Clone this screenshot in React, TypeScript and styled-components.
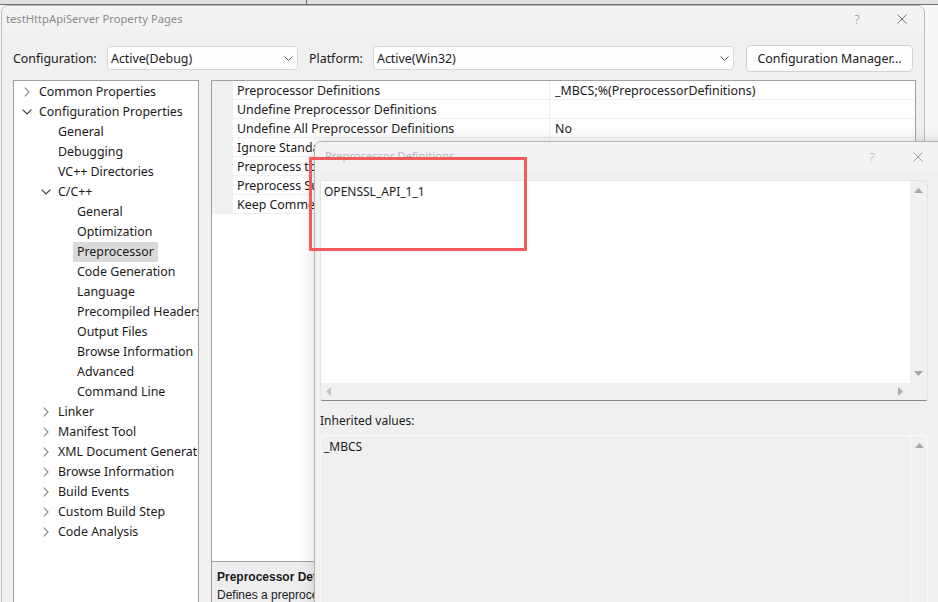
import React from 'react'
import styled, { createGlobalStyle } from 'styled-components'

const uiFont = `'Noto Sans', 'Open Sans', sans-serif`
const dlgFont = `'Liberation Sans', Arial, sans-serif`

const GlobalStyle = createGlobalStyle`
	html, body {
		margin: 0;
		padding: 0;
		overflow: hidden;
		background: #f8f8f8;
	}
	* {
		box-sizing: border-box;
	}
`

interface TreeItem {
	label: string
	level: number
	toggle?: 'open' | 'closed'
	selected?: boolean
}

const treeItems: TreeItem[] = [
	{ label: 'Common Properties', level: 0, toggle: 'closed' },
	{ label: 'Configuration Properties', level: 0, toggle: 'open' },
	{ label: 'General', level: 1 },
	{ label: 'Debugging', level: 1 },
	{ label: 'VC++ Directories', level: 1 },
	{ label: 'C/C++', level: 1, toggle: 'open' },
	{ label: 'General', level: 2 },
	{ label: 'Optimization', level: 2 },
	{ label: 'Preprocessor', level: 2, selected: true },
	{ label: 'Code Generation', level: 2 },
	{ label: 'Language', level: 2 },
	{ label: 'Precompiled Headers', level: 2 },
	{ label: 'Output Files', level: 2 },
	{ label: 'Browse Information', level: 2 },
	{ label: 'Advanced', level: 2 },
	{ label: 'Command Line', level: 2 },
	{ label: 'Linker', level: 1, toggle: 'closed' },
	{ label: 'Manifest Tool', level: 1, toggle: 'closed' },
	{ label: 'XML Document Generator', level: 1, toggle: 'closed' },
	{ label: 'Browse Information', level: 1, toggle: 'closed' },
	{ label: 'Build Events', level: 1, toggle: 'closed' },
	{ label: 'Custom Build Step', level: 1, toggle: 'closed' },
	{ label: 'Code Analysis', level: 1, toggle: 'closed' },
]

const properties: [string, string][] = [
	['Preprocessor Definitions', '_MBCS;%(PreprocessorDefinitions)'],
	['Undefine Preprocessor Definitions', ''],
	['Undefine All Preprocessor Definitions', 'No'],
	['Ignore Standard Include Paths', 'No'],
	['Preprocess to a File', 'No'],
	['Preprocess Suppress Line Numbers', 'No'],
	['Keep Comments', 'No'],
]

const CloseGlyph = ({ color }: { color: string }) => (
	<svg width='10' height='10' viewBox='0 0 10 10'>
		<path d='M0.5 0.5 L9.5 9.5 M9.5 0.5 L0.5 9.5' stroke={color} strokeWidth='1' fill='none' />
	</svg>
)

const TreeChevron = ({ open }: { open: boolean }) =>
	open ? (
		<svg width='10' height='6' viewBox='0 0 10 6'>
			<polyline points='0.6,0.6 5,5 9.4,0.6' fill='none' stroke='#3c3c3c' strokeWidth='1.2' />
		</svg>
	) : (
		<svg width='6' height='10' viewBox='0 0 6 10'>
			<polyline points='0.8,0.6 5,5 0.8,9.4' fill='none' stroke='#8c8c8c' strokeWidth='1.2' />
		</svg>
	)

const ComboChevron = () => (
	<svg width='9' height='5' viewBox='0 0 9 5'>
		<polyline points='0.5,0.5 4.5,4.5 8.5,0.5' fill='none' stroke='#5c5c5c' strokeWidth='1' />
	</svg>
)

const Arrow = ({ dir, color }: { dir: 'up' | 'down' | 'left' | 'right'; color: string }) => {
	if (dir === 'up' || dir === 'down') {
		return (
			<svg width='9' height='5' viewBox='0 0 9 5'>
				<polygon points={dir === 'up' ? '0,5 4.5,0 9,5' : '0,0 4.5,5 9,0'} fill={color} />
			</svg>
		)
	}
	return (
		<svg width='5' height='9' viewBox='0 0 5 9'>
			<polygon points={dir === 'left' ? '5,0 0,4.5 5,9' : '0,0 5,4.5 0,9'} fill={color} />
		</svg>
	)
}

const App = () => {
	return (
		<Desktop>
			<GlobalStyle />
			<BackStrip>
				<BackPane />
			</BackStrip>
			<MainWindow>
				<TitleBar>
					<TitleText>testHttpApiServer Property Pages</TitleText>
					<CaptionButton $w={46}>
						<HelpGlyph $color='#8a8a8a'>?</HelpGlyph>
					</CaptionButton>
					<CaptionButton $w={44}>
						<CloseGlyph color='#707070' />
					</CaptionButton>
				</TitleBar>
				<ConfigRow>
					<FieldLabel $w={94}>Configuration:</FieldLabel>
					<Combo $w={191}>
						<span>Active(Debug)</span>
						<ComboChevron />
					</Combo>
					<FieldLabel $w={64} style={{ marginLeft: 11 }}>
						Platform:
					</FieldLabel>
					<Combo $w={361}>
						<span>Active(Win32)</span>
						<ComboChevron />
					</Combo>
					<ManagerButton type='button'>Configuration Manager...</ManagerButton>
				</ConfigRow>
				<Content>
					<TreePanel>
						{treeItems.map((item, i) => (
							<TreeRow key={i} $level={item.level}>
								<ToggleBox>{item.toggle ? <TreeChevron open={item.toggle === 'open'} /> : null}</ToggleBox>
								<TreeLabel $selected={!!item.selected}>{item.label}</TreeLabel>
							</TreeRow>
						))}
					</TreePanel>
					<GridPanel>
						<GridBody>
							{properties.map(([name, value]) => (
								<PropRow key={name}>
									<Gutter />
									<NameCell>{name}</NameCell>
									<ValueCell>{value}</ValueCell>
								</PropRow>
							))}
						</GridBody>
						<DescPanel>
							<DescTitle>Preprocessor Definitions</DescTitle>
							<DescText>Defines a preprocessing symbols for your source file.</DescText>
						</DescPanel>
					</GridPanel>
				</Content>
			</MainWindow>

			<Dialog>
				<DialogTitleBar>
					<DialogTitle>Preprocessor Definitions</DialogTitle>
					<CaptionButton $w={46}>
						<HelpGlyph $color='#a9a9a9'>?</HelpGlyph>
					</CaptionButton>
					<CaptionButton $w={46}>
						<CloseGlyph color='#9c9c9c' />
					</CaptionButton>
				</DialogTitleBar>
				<DialogBody>
					<EditField>
						<EditText>OPENSSL_API_1_1</EditText>
						<VScroll>
							<Arrow dir='up' color='#a6a6a6' />
							<Arrow dir='down' color='#a6a6a6' />
						</VScroll>
						<HScroll>
							<Arrow dir='left' color='#c4c4c4' />
							<Arrow dir='right' color='#acacac' />
						</HScroll>
						<Corner />
					</EditField>
					<SectionLabel>Inherited values:</SectionLabel>
					<InheritedField>
						<EditText>_MBCS</EditText>
						<InheritedScroll>
							<Arrow dir='up' color='#a6a6a6' />
						</InheritedScroll>
					</InheritedField>
				</DialogBody>
			</Dialog>

			<Highlight />
		</Desktop>
	)
}

export default App

const Desktop = styled.div`
	position: relative;
	width: 938px;
	height: 602px;
	overflow: hidden;
	display: flex;
	flex-direction: column;
	background: #f8f8f8;
	font-family: ${uiFont};
	color: #1a1a1a;
`

const BackStrip = styled.div`
	flex: none;
	height: 5px;
	display: flex;
	background: #e1e1e1;
	border-bottom: 1px solid #66707c;
`

const BackPane = styled.div`
	width: 307px;
	border-right: 1px solid #707070;
`

const MainWindow = styled.div`
	flex: none;
	width: 924px;
	height: 640px;
	margin-left: 1px;
	display: flex;
	flex-direction: column;
	background: #f0f0f0;
	border: 1px solid #b9b9b9;
	border-radius: 7px 7px 0 0;
	overflow: hidden;
`

const TitleBar = styled.div`
	flex: none;
	height: 25px;
	display: flex;
	align-items: center;
	padding-left: 4px;
	background: #f3f3f3;
`

const TitleText = styled.span`
	flex: 1;
	font-size: 11.2px;
	color: #8b8b8b;
	white-space: nowrap;
`

const CaptionButton = styled.div<{ $w: number }>`
	width: ${({ $w }) => $w}px;
	height: 100%;
	display: flex;
	align-items: center;
	justify-content: center;
`

const HelpGlyph = styled.span<{ $color: string }>`
	font-family: ${uiFont};
	font-size: 13px;
	font-weight: 300;
	color: ${({ $color }) => $color};
`

const ConfigRow = styled.div`
	flex: none;
	height: 49px;
	display: flex;
	align-items: center;
	padding: 5px 0 0 11px;
	font-size: 12.4px;
`

const FieldLabel = styled.label<{ $w: number }>`
	width: ${({ $w }) => $w}px;
	flex: none;
	white-space: nowrap;
`

const Combo = styled.div<{ $w: number }>`
	width: ${({ $w }) => $w}px;
	height: 24px;
	flex: none;
	display: flex;
	align-items: center;
	justify-content: space-between;
	padding: 0 4px 0 3px;
	background: #fefefe;
	border: 1px solid #d6d6d6;
	border-radius: 4px;
`

const ManagerButton = styled.button`
	width: 167px;
	height: 27px;
	margin-left: 12px;
	padding: 0;
	font-family: ${uiFont};
	font-size: 12.4px;
	color: #1a1a1a;
	background: #fdfdfd;
	border: 1px solid #d2d2d2;
	border-radius: 4px;
`

const Content = styled.div`
	flex: 1;
	min-height: 0;
	display: flex;
	gap: 12px;
	padding-left: 11px;
	font-size: 12.4px;
`

const TreePanel = styled.div`
	width: 186px;
	flex: none;
	padding-top: 1px;
	background: #ffffff;
	border: 1px solid #a0a0a0;
	overflow: hidden;
`

const TreeRow = styled.div<{ $level: number }>`
	height: 20px;
	display: flex;
	align-items: center;
	padding-left: ${({ $level }) => 6 + $level * 19}px;
	white-space: nowrap;
`

const ToggleBox = styled.span`
	width: 13px;
	margin-right: 6px;
	flex: none;
	display: flex;
	align-items: center;
	justify-content: center;
`

const TreeLabel = styled.span<{ $selected: boolean }>`
	margin-left: -4px;
	padding: 0 4px;
	line-height: 20px;
	background: ${({ $selected }) => ($selected ? '#d9d9d9' : 'transparent')};
`

const GridPanel = styled.div`
	width: 705px;
	flex: none;
	display: flex;
	flex-direction: column;
	background: #ffffff;
	border: 1px solid #a0a0a0;
	overflow: hidden;
`

const GridBody = styled.div`
	height: 480px;
	flex: none;
	background: #ffffff;
`

const PropRow = styled.div`
	height: 19px;
	display: flex;
	white-space: nowrap;
`

const Gutter = styled.div`
	width: 21px;
	flex: none;
	background: #f0f0f0;
`

const NameCell = styled.div`
	width: 317px;
	flex: none;
	padding: 1px 0 0 4px;
	line-height: 18px;
	overflow: hidden;
	border-bottom: 1px solid #f0f0f0;
	border-right: 1px solid #f0f0f0;
`

const ValueCell = styled.div`
	flex: 1;
	padding: 1px 0 0 5px;
	line-height: 18px;
	overflow: hidden;
	border-bottom: 1px solid #f0f0f0;
`

const DescPanel = styled.div`
	flex: 1;
	padding: 6px 5px;
	background: #eeeef1;
	border-top: 1px solid #a0a0a0;
	font-family: ${dlgFont};
	font-size: 12px;
	line-height: 18px;
	white-space: nowrap;
`

const DescTitle = styled.div`
	font-weight: bold;
`

const DescText = styled.div``

const Dialog = styled.section`
	position: absolute;
	left: 314px;
	top: 141px;
	width: 640px;
	height: 480px;
	display: flex;
	flex-direction: column;
	background: #f0f0f0;
	border: 1px solid #b4b4b4;
	border-radius: 8px 8px 0 0;
	box-shadow: 0 0 16px rgba(0, 0, 0, 0.16);
	overflow: hidden;
`

const DialogTitleBar = styled.div`
	flex: none;
	height: 30px;
	display: flex;
	align-items: center;
	padding: 0 12px 0 10px;
	background: #f3f3f3;
`

const DialogTitle = styled.span`
	flex: 1;
	margin-bottom: 3px;
	font-size: 11.2px;
	color: #b8b8b8;
	white-space: nowrap;
`

const DialogBody = styled.div`
	flex: 1;
	padding: 8px 0 0 5px;
	font-family: ${uiFont};
	font-size: 12px;
`

const EditField = styled.div`
	width: 608px;
	height: 221px;
	display: grid;
	grid-template-columns: 1fr 17px;
	grid-template-rows: 1fr 17px;
	background: #f0f0f0;
	border: 1px solid #e4e4e4;
	border-bottom-color: #868686;
	border-radius: 3px;
	overflow: hidden;
`

const EditText = styled.div`
	padding: 2px 3px;
	line-height: 17px;
	color: #1a1a1a;
	background: transparent;
	${EditField} & {
		background: #ffffff;
	}
`

const VScroll = styled.div`
	display: flex;
	flex-direction: column;
	align-items: center;
	justify-content: space-between;
	padding: 7px 0;
	background: #f0f0f0;
`

const HScroll = styled.div`
	display: flex;
	align-items: center;
	justify-content: space-between;
	padding: 0 7px 0 5px;
	background: #f0f0f0;
`

const Corner = styled.div`
	background: #f0f0f0;
`

const SectionLabel = styled.div`
	margin-top: 11px;
	line-height: 18px;
	color: #1a1a1a;
`

const InheritedField = styled.div`
	width: 608px;
	height: 200px;
	margin-top: 5px;
	display: grid;
	grid-template-columns: 1fr 17px;
	background: #f0f0f0;
	border: 1px solid #fbfbfb;
	border-radius: 3px;
`

const InheritedScroll = styled.div`
	display: flex;
	flex-direction: column;
	align-items: center;
	padding-top: 7px;
	border-left: 1px solid #fbfbfb;
`

const Highlight = styled.div`
	position: absolute;
	left: 309px;
	top: 157px;
	width: 218px;
	height: 94px;
	border: 3px solid #f35a5a;
	border-radius: 1px;
	pointer-events: none;
`
